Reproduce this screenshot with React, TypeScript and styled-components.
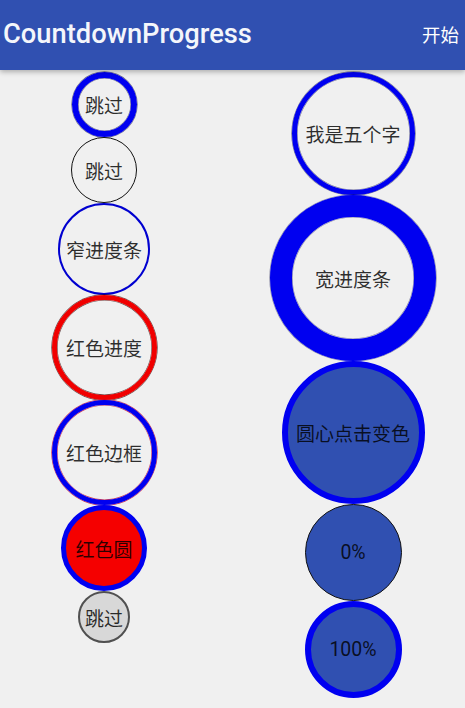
import React from "react";
import styled, { createGlobalStyle } from "styled-components";

const Global = createGlobalStyle`
  html, body {
    margin: 0;
    padding: 0;
    background: #f0f0f0;
  }
  body {
    width: 465px;
    height: 708px;
    overflow: hidden;
    font-family: Roboto, "Noto Sans CJK SC", sans-serif;
  }
`;

const Page = styled.div`
  width: 465px;
  height: 708px;
  background: #f0f0f0;
  display: flex;
  flex-direction: column;
`;

const AppBar = styled.header`
  position: relative;
  z-index: 2;
  height: 70px;
  flex: 0 0 70px;
  background: #3050b1;
  display: flex;
  align-items: center;
  justify-content: space-between;
  padding: 0 6px 2px 3px;
  box-sizing: border-box;
  box-shadow: 0 2px 5px rgba(0, 0, 0, 0.28);
`;

const Title = styled.h1`
  margin: 0;
  font-family: Roboto, sans-serif;
  font-weight: 500;
  font-size: 27.3px;
  color: #f4f6fb;
  letter-spacing: 0;
`;

const Action = styled.span`
  font-family: "Noto Sans CJK SC", sans-serif;
  font-size: 18.5px;
  color: #ffffff;
`;

const Content = styled.main`
  display: flex;
  padding-top: 2px;
`;

const Column = styled.div<{ $width: number; $push?: boolean }>`
  width: ${(p) => p.$width}px;
  margin-left: ${(p) => (p.$push ? "auto" : "0")};
  display: flex;
  flex-direction: column;
  align-items: center;
`;

const Circle = styled.div<{
  $size: number;
  $border: number;
  $color: string;
  $fill?: string;
  $ring?: string;
}>`
  width: ${(p) => p.$size}px;
  height: ${(p) => p.$size}px;
  flex: 0 0 ${(p) => p.$size}px;
  box-sizing: border-box;
  border-radius: 50%;
  border: ${(p) => p.$border}px solid ${(p) => p.$color};
  background: ${(p) => p.$fill ?? "transparent"};
  box-shadow: ${(p) =>
    p.$ring ? `inset 0 0 0 0.6px ${p.$ring}, 0 0 0 0.7px ${p.$ring}` : "none"};
  display: flex;
  align-items: center;
  justify-content: center;
  font-family: "Noto Sans CJK SC", sans-serif;
  font-size: 19px;
  line-height: 1;
  color: rgba(0, 0, 0, 0.82);
  white-space: nowrap;
`;

const Percent = styled.span`
  font-family: Roboto, sans-serif;
  font-size: 19.5px;
`;

type C = {
  label: string;
  size: number;
  border: number;
  color: string;
  fill?: string;
  ring?: string;
  latin?: boolean;
};

const BLUE = "#0000f0";
const PRIMARY = "#3050b1";

const left: C[] = [
  { label: "跳过", size: 65, border: 6, color: BLUE, ring: "rgba(20,20,60,0.6)" },
  { label: "跳过", size: 66, border: 1, color: "#111" },
  { label: "窄进度条", size: 92, border: 2, color: "#0000d0" },
  { label: "红色进度", size: 105, border: 5, color: "#f00000", ring: "rgba(40,0,0,0.7)" },
  { label: "红色边框", size: 105, border: 5, color: BLUE, ring: "rgba(200,0,40,0.8)" },
  { label: "红色圆", size: 86, border: 5, color: BLUE, fill: "#f50000" },
  { label: "跳过", size: 52, border: 2, color: "#505050", fill: "#d8d8d8" },
];

const right: C[] = [
  { label: "我是五个字", size: 123, border: 5, color: BLUE, ring: "rgba(16,16,70,0.55)" },
  { label: "宽进度条", size: 166, border: 22, color: BLUE, ring: "rgba(16,16,70,0.45)" },
  { label: "圆心点击变色", size: 143, border: 6, color: BLUE, fill: PRIMARY },
  { label: "0%", size: 97, border: 1, color: "#111", fill: PRIMARY, latin: true },
  { label: "100%", size: 97, border: 6, color: BLUE, fill: PRIMARY, latin: true },
];

const renderCircle = (c: C, i: number) => (
  <Circle
    key={i}
    $size={c.size}
    $border={c.border}
    $color={c.color}
    $fill={c.fill}
    $ring={c.ring}
  >
    {c.latin ? <Percent>{c.label}</Percent> : c.label}
  </Circle>
);

export default function App() {
  return (
    <Page>
      <Global />
      <AppBar>
        <Title>CountdownProgress</Title>
        <Action>开始</Action>
      </AppBar>
      <Content>
        <Column $width={208}>{left.map(renderCircle)}</Column>
        <Column $width={224} $push>
          {right.map(renderCircle)}
        </Column>
      </Content>
    </Page>
  );
}
